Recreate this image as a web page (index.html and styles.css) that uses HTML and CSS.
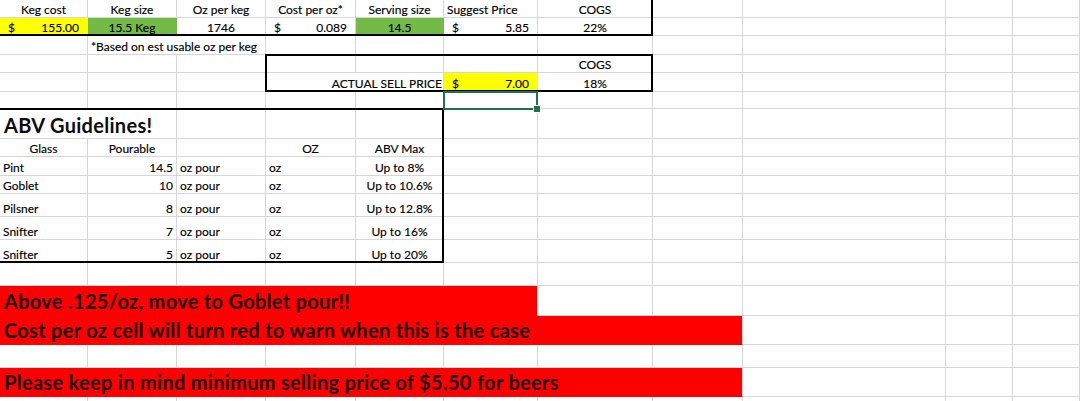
FILE: index.html
```html
<!DOCTYPE html>
<html lang="en">
<head>
<meta charset="utf-8">
<title>Keg pricing sheet</title>
<link rel="stylesheet" href="styles.css">
</head>
<body>
<div class="stack">
  <div class="sheet">
    <!-- row 1 -->
    <div class="c ctr">Keg cost</div><div class="c ctr">Keg size</div><div class="c ctr">Oz per keg</div><div class="c ctr">Cost per oz*</div><div class="c ctr">Serving size</div><div class="c">Suggest Price</div><div class="c ctr">COGS</div><div class="c"></div><div class="c"></div><div class="c"></div><div class="c"></div>
    <!-- row 2 -->
    <div class="c acct yellow"><span>$</span><span>155.00</span></div><div class="c ctr green">15.5 Keg</div><div class="c ctr">1746</div><div class="c acct"><span>$</span><span>0.089</span></div><div class="c ctr green">14.5</div><div class="c acct"><span>$</span><span>5.85</span></div><div class="c ctr">22%</div><div class="c"></div><div class="c"></div><div class="c"></div><div class="c"></div>
    <!-- row 3 -->
    <div class="c"></div><div class="c span2">*Based on est usable oz per keg</div><div class="c"></div><div class="c"></div><div class="c"></div><div class="c"></div><div class="c"></div><div class="c"></div><div class="c"></div><div class="c"></div>
    <!-- row 4 -->
    <div class="c"></div><div class="c"></div><div class="c"></div><div class="c"></div><div class="c"></div><div class="c"></div><div class="c ctr">COGS</div><div class="c"></div><div class="c"></div><div class="c"></div><div class="c"></div>
    <!-- row 5 -->
    <div class="c"></div><div class="c"></div><div class="c"></div><div class="c span2 rgt tight">ACTUAL SELL PRICE</div><div class="c acct yellow"><span>$</span><span>7.00</span></div><div class="c ctr">18%</div><div class="c"></div><div class="c"></div><div class="c"></div><div class="c"></div>
    <!-- row 6 -->
    <div class="c"></div><div class="c"></div><div class="c"></div><div class="c"></div><div class="c"></div><div class="c"></div><div class="c"></div><div class="c"></div><div class="c"></div><div class="c"></div><div class="c"></div>
    <!-- row 7 -->
    <div class="c span2 title">ABV Guidelines!</div><div class="c"></div><div class="c"></div><div class="c"></div><div class="c"></div><div class="c"></div><div class="c"></div><div class="c"></div><div class="c"></div><div class="c"></div>
    <!-- row 8 -->
    <div class="c ctr">Glass</div><div class="c ctr">Pourable</div><div class="c"></div><div class="c ctr">OZ</div><div class="c ctr">ABV Max</div><div class="c"></div><div class="c"></div><div class="c"></div><div class="c"></div><div class="c"></div><div class="c"></div>
    <!-- row 9 -->
    <div class="c">Pint</div><div class="c rgt">14.5</div><div class="c">oz pour</div><div class="c">oz</div><div class="c ctr">Up to 8%</div><div class="c"></div><div class="c"></div><div class="c"></div><div class="c"></div><div class="c"></div><div class="c"></div>
    <!-- row 10 -->
    <div class="c">Goblet</div><div class="c rgt">10</div><div class="c">oz pour</div><div class="c">oz</div><div class="c ctr">Up to 10.6%</div><div class="c"></div><div class="c"></div><div class="c"></div><div class="c"></div><div class="c"></div><div class="c"></div>
    <!-- row 11 -->
    <div class="c">Pilsner</div><div class="c rgt">8</div><div class="c">oz pour</div><div class="c">oz</div><div class="c ctr">Up to 12.8%</div><div class="c"></div><div class="c"></div><div class="c"></div><div class="c"></div><div class="c"></div><div class="c"></div>
    <!-- row 12 -->
    <div class="c">Snifter</div><div class="c rgt">7</div><div class="c">oz pour</div><div class="c">oz</div><div class="c ctr">Up to 16%</div><div class="c"></div><div class="c"></div><div class="c"></div><div class="c"></div><div class="c"></div><div class="c"></div>
    <!-- row 13 -->
    <div class="c">Snifter</div><div class="c rgt">5</div><div class="c">oz pour</div><div class="c">oz</div><div class="c ctr">Up to 20%</div><div class="c"></div><div class="c"></div><div class="c"></div><div class="c"></div><div class="c"></div><div class="c"></div>
    <!-- row 14 -->
    <div class="c"></div><div class="c"></div><div class="c"></div><div class="c"></div><div class="c"></div><div class="c"></div><div class="c"></div><div class="c"></div><div class="c"></div><div class="c"></div><div class="c"></div>
    <!-- row 15 -->
    <div class="c red span6">Above .125/oz, move to Goblet pour!!</div><div class="c"></div><div class="c"></div><div class="c"></div><div class="c"></div><div class="c"></div>
    <!-- row 16 -->
    <div class="c red span8">Cost per oz cell will turn red to warn when this is the case</div><div class="c"></div><div class="c"></div><div class="c"></div>
    <!-- row 17 -->
    <div class="c"></div><div class="c"></div><div class="c"></div><div class="c"></div><div class="c"></div><div class="c"></div><div class="c"></div><div class="c"></div><div class="c"></div><div class="c"></div><div class="c"></div>
    <!-- row 18 -->
    <div class="c red span8">Please keep in mind minimum selling price of $5.50 for beers</div><div class="c"></div><div class="c"></div><div class="c"></div>
    <!-- row 19 -->
    <div class="c"></div><div class="c"></div><div class="c"></div><div class="c"></div><div class="c"></div><div class="c"></div><div class="c"></div><div class="c"></div><div class="c"></div><div class="c"></div><div class="c"></div>
  </div>
  <div class="overlay">
    <div class="box box-top"></div>
    <div class="box box-sell"></div>
    <div class="box box-abv"></div>
    <div class="selection"><span class="handle"></span></div>
  </div>
</div>
</body>
</html>
```

FILE: styles.css
```css
html, body {
  margin: 0;
  padding: 0;
  background: #ffffff;
  overflow: hidden;
}

body {
  font-family: Lato, "Open Sans", "Liberation Sans", sans-serif;
  font-size: 12px;
  color: #000000;
}

.stack {
  display: grid;
  width: 1080px;
  height: 401px;
  overflow: hidden;
}

.sheet,
.overlay {
  grid-area: 1 / 1;
  display: grid;
  grid-template-columns: 88px 89px 89px 90px 88px 94px 115px 90px 203px 67px 67px;
  grid-template-rows: 18px 18px 19px 18px 19px 17px 30px 18px 19px 18px 23px 23px 23px 23px 30px 29px 23px 29px 23px;
}

.overlay {
  pointer-events: none;
}

.c {
  box-sizing: border-box;
  border-right: 1px solid #d6d6d6;
  border-bottom: 1px solid #d6d6d6;
  padding: 0 3px;
  display: flex;
  align-items: flex-end;
  line-height: 15px;
  white-space: nowrap;
  min-width: 0;
  -webkit-text-stroke: 0.15px #000000;
}

.ctr { justify-content: center; }
.rgt { justify-content: flex-end; }
.tight { padding-right: 1px; }

.span2 { grid-column: span 2; }
.span6 { grid-column: span 6; }
.span8 { grid-column: span 8; }

.acct {
  justify-content: space-between;
  padding: 0 8px 0 8px;
}

.yellow {
  background: #ffff00;
  border-right-color: transparent;
}

.green {
  background: #74ba46;
  border-right-color: transparent;
}

.title {
  font-weight: 700;
  font-size: 20px;
  letter-spacing: 0.3px;
  line-height: 23px;
  padding-left: 4px;
  padding-bottom: 1px;
  color: #0d0d0d;
  -webkit-text-stroke: 0;
}

.red {
  background: #ff0000;
  border-bottom-color: #ff0000;
  font-weight: 700;
  font-size: 20px;
  letter-spacing: 0.3px;
  line-height: 23px;
  padding-left: 4px;
  padding-bottom: 2px;
  color: #1a0505;
  -webkit-text-stroke: 0;
}

.box {
  box-sizing: border-box;
  border: 0 solid #000000;
}

.box-top {
  grid-row: 1 / 3;
  grid-column: 1 / 8;
  border-right-width: 2px;
  border-bottom-width: 2px;
}

.box-sell {
  grid-row: 4 / 6;
  grid-column: 4 / 8;
  border-width: 2px;
  margin: -1px 0 0 -1px;
}

.box-abv {
  grid-row: 7 / 14;
  grid-column: 1 / 6;
  border-top-width: 2px;
  border-right-width: 2px;
  border-bottom-width: 2px;
  margin-top: -1px;
}

.selection {
  grid-row: 6 / 7;
  grid-column: 6 / 7;
  box-sizing: border-box;
  border: 2px solid #217346;
  margin: -1px 0 -1px -1px;
  position: relative;
}

.handle {
  position: absolute;
  right: -5px;
  bottom: -5px;
  width: 6px;
  height: 6px;
  background: #217346;
  border: 1px solid #ffffff;
}
```
